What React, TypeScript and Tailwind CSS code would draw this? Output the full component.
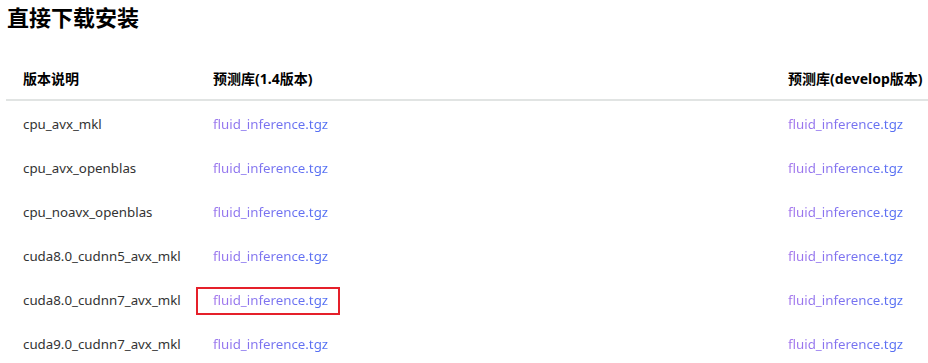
import React from 'react';

const rows = [
  'cpu_avx_mkl',
  'cpu_avx_openblas',
  'cpu_noavx_openblas',
  'cuda8.0_cudnn5_avx_mkl',
  'cuda8.0_cudnn7_avx_mkl',
  'cuda9.0_cudnn7_avx_mkl',
];

const linkClass =
  'bg-gradient-to-r from-[#a374ec] to-[#4f6ef3] bg-clip-text text-transparent cursor-pointer';

export default function App() {
  return (
    <div
      className="w-[928px] h-[363px] overflow-hidden bg-white text-[#222]"
      style={{ fontFamily: '"Noto Sans", "Noto Sans CJK SC", sans-serif' }}
    >
      <h1 className="pl-[7px] pt-[2px] text-[22px] leading-[30px] font-bold text-black">直接下载安装</h1>
      <div className="ml-[6px] w-[922px]">
        {/* header */}
        <div className="flex items-center h-[22px] mt-[35px] text-[14px] font-bold text-black whitespace-nowrap">
          <div className="w-[190px] pl-[17px]">版本说明</div>
          <div className="w-[575px] pl-[17px]">预测库(1.4版本)</div>
          <div className="flex-1 pl-[17px]">预测库(develop版本)</div>
        </div>
        <div className="mt-[10px] h-[2px] bg-[#e1e4e3]" />
        <div className="pt-[2px]">
          {rows.map((name, i) => (
            <div key={name} className="flex items-center h-[44px] text-[13.3px] whitespace-nowrap">
              <div className="w-[190px] pl-[17px] text-[#333]">{name}</div>
              <div className="w-[575px]">
                {i === 4 ? (
                  <span className="inline-flex items-center h-[28px] w-[144px] pl-[15px] border-2 border-[#e5202a]">
                    <a className={linkClass}>fluid_inference.tgz</a>
                  </span>
                ) : (
                  <a className={`${linkClass} pl-[17px]`}>fluid_inference.tgz</a>
                )}
              </div>
              <div className="flex-1 pl-[17px]">
                <a className={linkClass}>fluid_inference.tgz</a>
              </div>
            </div>
          ))}
        </div>
      </div>
    </div>
  );
}
